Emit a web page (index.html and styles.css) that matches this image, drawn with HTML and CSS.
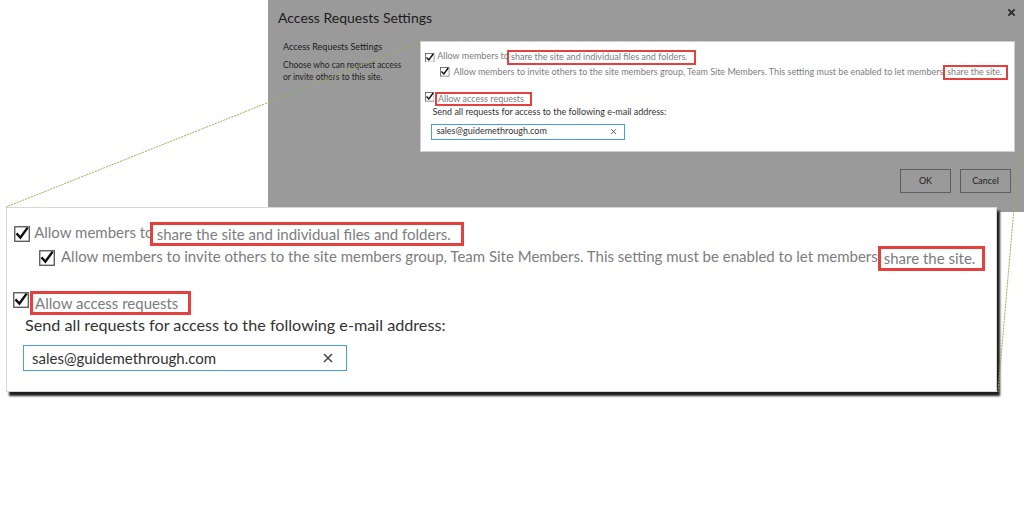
FILE: index.html
```html
<!DOCTYPE html>
<html lang="en">
<head>
<meta charset="utf-8">
<title>Access Requests Settings</title>
<link rel="stylesheet" href="styles.css">
</head>
<body>
<svg class="defs" width="0" height="0" aria-hidden="true">
  <symbol id="check" viewBox="0 0 16 16">
    <rect x="0.75" y="0.75" width="14.5" height="14.5" fill="#fff" stroke="#555" stroke-width="1.3"/>
    <path d="M3.3 8.2 L6.4 11.5 L12.9 2.6" fill="none" stroke="#111" stroke-width="2.4" stroke-linecap="square" stroke-linejoin="miter"/>
  </symbol>
  <symbol id="clear" viewBox="0 0 12 12">
    <path d="M2 2 L10 10 M10 2 L2 10" fill="none" stroke="#444" stroke-width="1.5"/>
  </symbol>
</svg>

<section class="dialog">
  <header class="dialog-head">
    <h1 class="dialog-title">Access Requests Settings</h1>
    <button class="dialog-close" aria-label="Close">
      <svg viewBox="0 0 10 10"><path d="M1.5 1.5 L8.5 8.5 M8.5 1.5 L1.5 8.5" stroke="#2a2a2a" stroke-width="2" fill="none"/></svg>
    </button>
  </header>
  <div class="dialog-body">
    <aside class="dialog-side">
      <h2 class="side-title">Access Requests Settings</h2>
      <p class="side-desc">Choose who can request access<br>or invite others to this site.</p>
    </aside>
    <div class="access-panel access-panel--small">
      <div class="opt opt--top">
        <svg class="cb"><use href="#check"/></svg>
        <span class="opt-text">Allow members to <mark class="hl hl--share">share the site and individual files and folders.</mark></span>
      </div>
      <div class="opt opt--sub">
        <svg class="cb"><use href="#check"/></svg>
        <span class="opt-text">Allow members to invite others to the site members group, Team Site Members. This setting must be enabled to let members<mark class="hl hl--site">share the site.</mark></span>
      </div>
      <div class="opt opt--req">
        <svg class="cb"><use href="#check"/></svg>
        <mark class="hl hl--req">Allow access requests</mark>
      </div>
      <p class="send">Send all requests for access to the following e-mail address:</p>
      <div class="email"><span>sales@guidemethrough.com</span><svg class="email-clear"><use href="#clear"/></svg></div>
    </div>
  </div>
  <footer class="dialog-foot">
    <button class="btn">OK</button>
    <button class="btn">Cancel</button>
  </footer>
</section>

<div class="callout access-panel access-panel--zoom">
  <div class="opt opt--top">
    <svg class="cb"><use href="#check"/></svg>
    <span class="opt-text">Allow members to <mark class="hl hl--share">share the site and individual files and folders.</mark></span>
  </div>
  <div class="opt opt--sub">
    <svg class="cb"><use href="#check"/></svg>
    <span class="opt-text">Allow members to invite others to the site members group, Team Site Members. This setting must be enabled to let members<mark class="hl hl--site">share the site.</mark></span>
  </div>
  <div class="opt opt--req">
    <svg class="cb"><use href="#check"/></svg>
    <mark class="hl hl--req">Allow access requests</mark>
  </div>
  <p class="send">Send all requests for access to the following e-mail address:</p>
  <div class="email"><span>sales@guidemethrough.com</span><svg class="email-clear"><use href="#clear"/></svg></div>
</div>

<svg class="leaders" viewBox="0 0 1024 513" aria-hidden="true">
  <line x1="420" y1="42" x2="6" y2="207"/>
  <line x1="1019" y1="151" x2="998" y2="392"/>
</svg>
</body>
</html>
```

FILE: styles.css
```css
html, body {
  margin: 0;
  padding: 0;
}

body {
  position: relative;
  width: 1024px;
  height: 513px;
  overflow: hidden;
  background: #fff;
  font-family: Lato, "Open Sans", sans-serif;
  color: #222;
}

.defs {
  position: absolute;
  width: 0;
  height: 0;
}

/* ---------- dialog ---------- */
.dialog {
  margin-left: 268px;
  width: 756px;
  height: 212px;
  background: #9a9a9a;
  display: flex;
  flex-direction: column;
}

.dialog-head {
  height: 34px;
  padding: 0 8px 0 10px;
  display: flex;
  align-items: center;
  justify-content: space-between;
}

.dialog-title {
  margin: 0;
  font-size: 14px;
  font-weight: 400;
  color: #1c1c1c;
}

.dialog-close {
  margin: 0 0 10px;
  padding: 0;
  border: 0;
  background: none;
  width: 9px;
  height: 9px;
  display: flex;
}

.dialog-close svg {
  width: 9px;
  height: 9px;
}

.dialog-body {
  margin-top: 7px;
  padding-left: 15px;
  display: flex;
}

.dialog-side {
  width: 137px;
  flex: none;
}

.side-title {
  margin: 0;
  font-size: 9px;
  font-weight: 400;
  line-height: 12px;
  color: #1a1a1a;
}

.side-desc {
  margin: 6px 0 0;
  font-size: 8.5px;
  line-height: 12px;
  color: #222;
}

.dialog-foot {
  margin-top: 17px;
  padding-right: 13px;
  display: flex;
  justify-content: flex-end;
  gap: 9px;
}

.btn {
  width: 51px;
  height: 24px;
  padding: 0;
  border: 1px solid #5e5e5e;
  background: transparent;
  font-family: Lato, "Open Sans", sans-serif;
  font-size: 9px;
  color: #1e1e1e;
}

/* ---------- access panel (shared, scaled by font-size) ---------- */
.access-panel {
  box-sizing: border-box;
  width: 66.07em;
  height: 12.33em;
  padding: 0.93em 0 0 0.4em;
  background: #fff;
  color: #7d7d7d;
  line-height: 1.2;
}

.access-panel--small {
  font-size: 9px;
  border: 1px solid #cfcfcf;
}

.access-panel--zoom {
  font-size: 15px;
  border: 1px solid #d8d8d8;
  box-shadow: 3px 4px 2px #1e1e1e;
}

.callout {
  position: absolute;
  left: 6px;
  top: 207px;
}

.opt {
  display: flex;
  align-items: center;
  height: 1.6em;
  white-space: nowrap;
}

.cb {
  width: 1.07em;
  height: 1.07em;
  flex: none;
}

.opt--top .cb {
  margin-left: 0.07em;
}

.opt--sub {
  height: 1.67em;
}

.opt--sub .cb {
  margin-left: 1.73em;
}

.opt-text {
  margin-left: 0.27em;
}

.opt--sub .opt-text {
  margin-left: 0.4em;
}

.opt--req {
  margin-top: 1.33em;
}

.opt--req .cb {
  margin-bottom: 0.4em;
}

.hl {
  display: inline-flex;
  align-items: center;
  box-sizing: border-box;
  height: 1.6em;
  background: none;
  color: inherit;
  border: 0.2em solid #e4403d;
  vertical-align: middle;
}

.access-panel--small .hl {
  border-width: 2px;
}

.hl--share {
  margin-left: -0.5em;
  padding: 0 0.7em 0 0.25em;
}

.hl--site {
  height: 1.67em;
  padding: 0 0.45em 0 0.2em;
}

.hl--req {
  margin-left: 0.07em;
  padding: 0 0.67em 0 0.13em;
}

.send {
  margin: 0;
  padding-left: 0.87em;
  height: 1.33em;
  line-height: 1.33em;
  color: #333;
  white-space: nowrap;
}

.access-panel--zoom .send {
  padding-left: 12px;
  height: 20px;
  line-height: 20px;
  font-size: 16.2px;
}

.email {
  box-sizing: border-box;
  margin: 0.67em 0 0 0.67em;
  width: 21.6em;
  height: 1.73em;
  padding: 0 0.8em 0 0.53em;
  border: 0.1em solid #4a9ee0;
  display: flex;
  align-items: center;
  justify-content: space-between;
  color: #333;
}

.email-clear {
  width: 0.8em;
  height: 0.8em;
}

/* ---------- leader lines ---------- */
.leaders {
  position: absolute;
  left: 0;
  top: 0;
  width: 1024px;
  height: 513px;
  pointer-events: none;
}

.leaders line {
  stroke: #8fb35a;
  stroke-width: 1;
  stroke-dasharray: 2 1;
}
```
